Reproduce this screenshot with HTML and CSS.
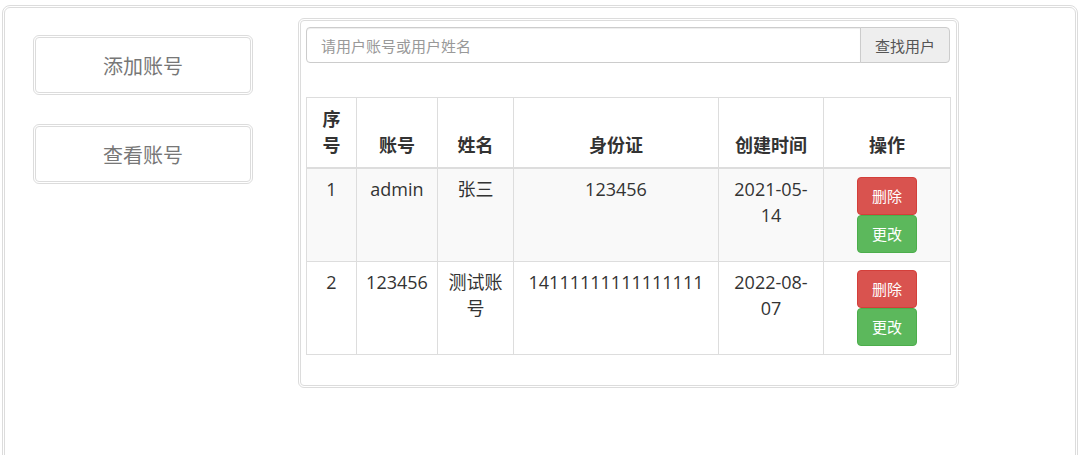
FILE: index.html
```html
<!DOCTYPE html>
<html lang="zh-CN">
<head>
<meta charset="utf-8">
<title>账号管理</title>
<link rel="stylesheet" href="styles.css">
</head>
<body>
<div class="page">
  <aside class="side">
    <button class="side-btn">添加账号</button>
    <button class="side-btn">查看账号</button>
  </aside>
  <section class="panel">
    <div class="search">
      <input class="search-input" type="text" placeholder="请用户账号或用户姓名">
      <button class="search-btn">查找用户</button>
    </div>
    <table class="grid">
      <colgroup>
        <col class="c1"><col class="c2"><col class="c3"><col class="c4"><col class="c5"><col class="c6">
      </colgroup>
      <thead>
        <tr><th>序号</th><th>账号</th><th>姓名</th><th>身份证</th><th>创建时间</th><th>操作</th></tr>
      </thead>
      <tbody>
        <tr class="odd">
          <td>1</td><td>admin</td><td>张三</td><td>123456</td><td>2021-05-14</td>
          <td><button class="act del">删除</button><button class="act edit">更改</button></td>
        </tr>
        <tr>
          <td>2</td><td>123456</td><td>测试账号</td><td>14111111111111111</td><td>2022-08-07</td>
          <td><button class="act del">删除</button><button class="act edit">更改</button></td>
        </tr>
      </tbody>
    </table>
  </section>
</div>
</body>
</html>
```
FILE: styles.css
```css
* { box-sizing: border-box; }
body {
  margin: 0;
  font-family: "Open Sans", "Noto Sans CJK SC", sans-serif;
  color: #333;
  background: #fff;
  overflow: hidden;
}
.page {
  margin: 5px 0 0 2px;
  width: 1076px;
  height: 460px;
  border: 3px double #dcdcdc;
  border-radius: 8px;
  display: flex;
  align-items: flex-start;
  padding: 10px 0 0 28px;
}
.side {
  width: 220px;
  margin-top: 17px;
  display: flex;
  flex-direction: column;
  gap: 29px;
}
.side-btn {
  height: 60px;
  border: 3px double #dcdcdc;
  border-radius: 6px;
  background: #fff;
  font-family: "Noto Sans CJK SC", sans-serif;
  font-size: 20px;
  color: #777;
}
.panel {
  margin-left: 45px;
  width: 661px;
  height: 370px;
  border: 3px double #dcdcdc;
  border-radius: 6px;
  padding: 6px 6px 0 5px;
}
.search {
  display: flex;
  height: 36px;
}
.search-input {
  flex: 1;
  min-width: 0;
  height: 36px;
  border: 1px solid #ccc;
  border-radius: 4px 0 0 4px;
  padding: 6px 14px;
  font-family: "Noto Sans CJK SC", sans-serif;
  font-size: 15px;
  color: #555;
  box-shadow: inset 0 1px 1px rgba(0,0,0,.075);
  outline: none;
}
.search-input::placeholder { color: #999; }
.search-btn {
  width: 90px;
  height: 36px;
  margin-left: -1px;
  border: 1px solid #ccc;
  border-radius: 0 4px 4px 0;
  background: #eee;
  font-family: "Noto Sans CJK SC", sans-serif;
  font-size: 15px;
  color: #555;
  padding: 0;
}
.grid {
  margin-top: 34px;
  width: 644px;
  border-collapse: collapse;
  table-layout: fixed;
  border: 1px solid #ddd;
  font-size: 18px;
}
.c1 { width: 50px; }
.c2 { width: 81px; }
.c3 { width: 76px; }
.c4 { width: 205px; }
.c5 { width: 105px; }
.c6 { width: 127px; }
.grid th, .grid td {
  border: 1px solid #ddd;
  padding: 8px;
  text-align: center;
  line-height: 1.42857;
}
.grid th {
  vertical-align: bottom;
  padding: 9px 8px 9px;
  border-bottom: 2px solid #ddd;
  font-weight: bold;
}
.grid td { vertical-align: top; }
.grid tr.odd td { background: #f9f9f9; }
.act {
  display: block;
  width: 60px;
  margin: 0 auto;
  padding: 8px 0;
  line-height: 20px;
  font-family: "Noto Sans CJK SC", sans-serif;
  font-size: 15px;
  color: #fff;
  border: 1px solid;
  border-radius: 4px;
}
.del { background: #d9534f; border-color: #d43f3a; }
.edit { background: #5cb85c; border-color: #4cae4c; }
```
